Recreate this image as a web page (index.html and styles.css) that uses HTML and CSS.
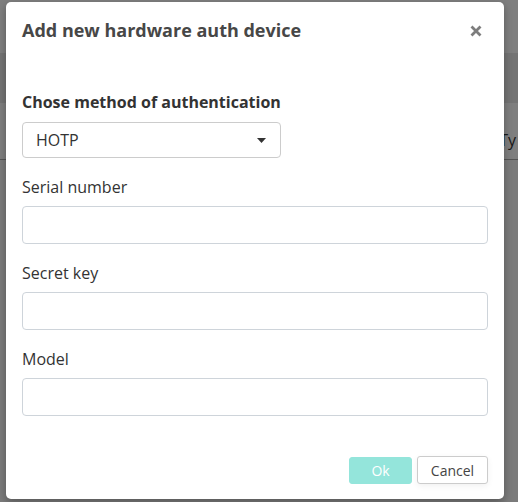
FILE: index.html
```html
<!DOCTYPE html>
<html>
<head>
<meta charset="utf-8">
<link rel="stylesheet" href="styles.css">
</head>
<body>
<div class="page">
  <div class="topbar"></div>
  <div class="band"></div>
  <div class="thead"><span class="th">Ty</span></div>
</div>
<div class="overlay"></div>
<div class="modal">
  <div class="modal-header">
    <h1 class="title">Add new hardware auth device</h1>
    <button class="close" aria-label="Close">
      <svg width="12" height="12" viewBox="0 0 12 12"><path d="M1.5 1.5 L10.5 10.5 M10.5 1.5 L1.5 10.5" stroke="#7d7d7d" stroke-width="2.8" stroke-linecap="butt"/></svg>
    </button>
  </div>
  <div class="modal-body">
    <h2 class="section">Chose method of authentication</h2>
    <div class="select">
      <span>HOTP</span>
      <svg class="caret" width="9" height="5" viewBox="0 0 9 5"><path d="M0 0 H9 L4.5 5 Z" fill="#333"/></svg>
    </div>
    <label class="label">Serial number</label>
    <div class="input"></div>
    <label class="label">Secret key</label>
    <div class="input"></div>
    <label class="label">Model</label>
    <div class="input"></div>
  </div>
  <div class="modal-footer">
    <button class="btn btn-ok">Ok</button>
    <button class="btn btn-cancel">Cancel</button>
  </div>
</div>
</body>
</html>
```

FILE: styles.css
```css
* { box-sizing: border-box; }
html, body { margin: 0; padding: 0; }
body {
  width: 518px;
  height: 502px;
  overflow: hidden;
  font-family: "Open Sans", "Liberation Sans", sans-serif;
  background: #f6f6f6;
  position: relative;
}
.page { display: flex; flex-direction: column; }
.topbar { height: 53px; background: #fff; }
.band { height: 50px; background: #e8e8e8; }
.thead {
  height: 57px;
  background: #fff;
  border-bottom: 1px solid #aaa;
  display: flex;
  align-items: center;
  justify-content: flex-end;
  padding-top: 18px;
  padding-right: 2px;
}
.th {
  font-size: 16px;
  color: #333;
}
.overlay {
  position: absolute;
  inset: 0;
  background: rgba(0, 0, 0, 0.5);
}
.modal {
  position: absolute;
  left: 6px;
  top: 2px;
  width: 498px;
  height: 497px;
  background: #fff;
  border-radius: 5px;
  box-shadow: 0 3px 9px rgba(0, 0, 0, 0.3);
  display: flex;
  flex-direction: column;
}
.modal-header {
  display: flex;
  align-items: center;
  justify-content: space-between;
  padding: 15px 16px 0 16px;
}
.title {
  margin: 0;
  font-size: 18px;
  line-height: 27px;
  font-weight: 700;
  color: #474747;
}
.close {
  border: 0;
  background: none;
  padding: 0;
  width: 12px;
  height: 12px;
  margin-right: 6px;
  display: flex;
}
.modal-body {
  padding: 46px 16px 0 16px;
  display: flex;
  flex-direction: column;
  flex: 1;
}
.section {
  margin: 0 0 8px 0;
  font-size: 16px;
  line-height: 24px;
  font-weight: 700;
  color: #333;
}
.select {
  width: 259px;
  height: 36px;
  border: 1px solid #ccc;
  border-radius: 4px;
  display: flex;
  align-items: center;
  justify-content: space-between;
  padding: 0 14px 0 13px;
  font-size: 16px;
  color: #333;
}
.caret { margin-top: 1px; }
.label {
  display: block;
  margin: 17px 0 7px 0;
  font-size: 16px;
  line-height: 24px;
  color: #333;
}
.input {
  height: 38px;
  border: 1px solid #ced4da;
  border-radius: 4px;
}
.modal-footer {
  display: flex;
  justify-content: flex-end;
  align-items: center;
  gap: 5px;
  padding: 0 16px 15px 16px;
}
.btn {
  font-family: "Open Sans", "Liberation Sans", sans-serif;
  font-size: 14px;
  border-radius: 3px;
  height: 28px;
  padding: 0;
}
.btn-ok {
  width: 63px;
  height: 27px;
  background: #94e5db;
  border: 1px solid #94e5db;
  color: #fff;
}
.btn-cancel {
  width: 71px;
  background: #fff;
  border: 1px solid #ccc;
  color: #444;
  box-shadow: 0 2px 6px rgba(0, 0, 0, 0.06);
}
```
